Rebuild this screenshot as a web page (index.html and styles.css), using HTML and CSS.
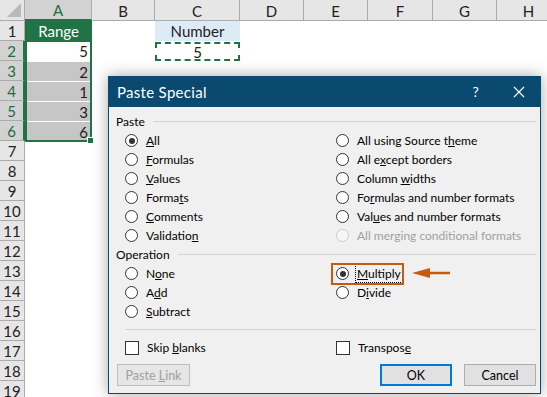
FILE: index.html
```html
<!DOCTYPE html>
<html lang="en">
<head>
    <meta charset="UTF-8">
    <title>Paste Special</title>
    <link rel="stylesheet" href="styles.css">
</head>
<body>
    <div class="sheet">
        <div class="grid">
            <div class="hd corner"><span class="tri"></span></div>
            <div class="hd col sel">A</div>
            <div class="hd col">B</div>
            <div class="hd col">C</div>
            <div class="hd col">D</div>
            <div class="hd col">E</div>
            <div class="hd col">F</div>
            <div class="hd col">G</div>
            <div class="hd col">H</div>

            <div class="rh">1</div>
            <div class="cell head-cell">Range</div><div class="cell"></div><div class="cell label">Number</div><div class="cell"></div><div class="cell"></div><div class="cell"></div><div class="cell"></div><div class="cell"></div>

            <div class="rh sel">2</div>
            <div class="cell num">5</div><div class="cell"></div><div class="cell copied">5</div><div class="cell"></div><div class="cell"></div><div class="cell"></div><div class="cell"></div><div class="cell"></div>

            <div class="rh sel">3</div>
            <div class="cell num grey">2</div><div class="cell"></div><div class="cell"></div><div class="cell"></div><div class="cell"></div><div class="cell"></div><div class="cell"></div><div class="cell"></div>

            <div class="rh sel">4</div>
            <div class="cell num grey">1</div><div class="cell"></div><div class="cell"></div><div class="cell"></div><div class="cell"></div><div class="cell"></div><div class="cell"></div><div class="cell"></div>

            <div class="rh sel">5</div>
            <div class="cell num grey">3</div><div class="cell"></div><div class="cell"></div><div class="cell"></div><div class="cell"></div><div class="cell"></div><div class="cell"></div><div class="cell"></div>

            <div class="rh sel">6</div>
            <div class="cell num grey">6</div><div class="cell"></div><div class="cell"></div><div class="cell"></div><div class="cell"></div><div class="cell"></div><div class="cell"></div><div class="cell"></div>

            <div class="rh">7</div><div class="fill"></div>
            <div class="rh">8</div><div class="fill"></div>
            <div class="rh">9</div><div class="fill"></div>
            <div class="rh">10</div><div class="fill"></div>
            <div class="rh">11</div><div class="fill"></div>
            <div class="rh">12</div><div class="fill"></div>
            <div class="rh">13</div><div class="fill"></div>
            <div class="rh">14</div><div class="fill"></div>
            <div class="rh">15</div><div class="fill"></div>
            <div class="rh">16</div><div class="fill"></div>
            <div class="rh">17</div><div class="fill"></div>
            <div class="rh">18</div><div class="fill"></div>
            <div class="rh">19</div><div class="fill"></div>
        </div>
        <div class="selection"><span class="handle"></span></div>
    </div>

    <div class="dialog">
        <div class="titlebar">
            <span class="dlg-title">Paste Special</span>
            <span class="help">?</span>
            <svg class="close" width="12" height="12" viewBox="0 0 12 12">
                <path d="M1 1 L11 11 M11 1 L1 11" stroke="#fff" stroke-width="1.2" fill="none"/>
            </svg>
        </div>
        <div class="body">
            <div class="legend"><span>Paste</span><span class="rule"></span></div>
            <div class="options">
                <div class="opt"><span class="radio on"></span><span><u>A</u>ll</span></div>
                <div class="opt"><span class="radio"></span><span>All using Source t<u>h</u>eme</span></div>
                <div class="opt"><span class="radio"></span><span><u>F</u>ormulas</span></div>
                <div class="opt"><span class="radio"></span><span>All e<u>x</u>cept borders</span></div>
                <div class="opt"><span class="radio"></span><span><u>V</u>alues</span></div>
                <div class="opt"><span class="radio"></span><span>Column <u>w</u>idths</span></div>
                <div class="opt"><span class="radio"></span><span>Forma<u>t</u>s</span></div>
                <div class="opt"><span class="radio"></span><span>Fo<u>r</u>mulas and number formats</span></div>
                <div class="opt"><span class="radio"></span><span><u>C</u>omments</span></div>
                <div class="opt"><span class="radio"></span><span>Val<u>u</u>es and number formats</span></div>
                <div class="opt"><span class="radio"></span><span>Validatio<u>n</u></span></div>
                <div class="opt off"><span class="radio"></span><span>All merging conditional formats</span></div>
            </div>

            <div class="legend"><span>Operation</span><span class="rule"></span></div>
            <div class="options">
                <div class="opt"><span class="radio"></span><span>N<u>o</u>ne</span></div>
                <div class="opt"><span class="radio on"></span><span class="focus"><u>M</u>ultiply</span></div>
                <div class="opt"><span class="radio"></span><span>A<u>d</u>d</span></div>
                <div class="opt"><span class="radio"></span><span>D<u>i</u>vide</span></div>
                <div class="opt"><span class="radio"></span><span><u>S</u>ubtract</span></div>
                <div class="opt"></div>
            </div>

            <div class="separator"></div>

            <div class="options">
                <div class="opt"><span class="check"></span><span>Skip <u>b</u>lanks</span></div>
                <div class="opt"><span class="check"></span><span>Transpos<u>e</u></span></div>
            </div>

            <div class="buttons">
                <button class="btn disabled">Paste <u>L</u>ink</button>
                <span class="spacer"></span>
                <button class="btn default">OK</button>
                <button class="btn">Cancel</button>
            </div>

            <div class="callout"></div>
            <svg class="arrow" width="40" height="12" viewBox="0 0 40 12">
                <path d="M0 6 L18 1 L18 4.8 L38 4.8 L38 7.2 L18 7.2 L18 11 Z" fill="#c55a11"/>
            </svg>
        </div>
    </div>
</body>
</html>
```

FILE: styles.css
```css
body {
    margin: 0;
    padding: 0;
    background: #fff;
    font-family: 'Lato', 'Liberation Sans', sans-serif;
    overflow: hidden;
}

.sheet {
    position: relative;
    width: 547px;
    height: 397px;
    overflow: hidden;
}

.grid {
    display: grid;
    grid-template-columns: 25px 67px 63px 85px 64px 64px 65px 64px 64px;
    grid-template-rows: 21px;
    grid-auto-rows: 20px;
    font-size: 15px;
    color: #222;
}

/* headers */
.hd {
    background: #e6e6e6;
    border-bottom: 1px solid #ababab;
    box-sizing: border-box;
}

.corner {
    position: relative;
    border-right: 1px solid #ababab;
}

.corner .tri {
    position: absolute;
    right: 3px;
    bottom: 3px;
    width: 0;
    height: 0;
    border-left: 14px solid transparent;
    border-bottom: 14px solid #b9b9b9;
}

.col {
    display: flex;
    align-items: center;
    justify-content: center;
    border-right: 1px solid #ababab;
    padding-top: 1px;
}

.col.sel {
    background: #d2d2d2;
    color: #1e6b42;
    border-bottom: 2px solid #217346;
}

.rh {
    background: #e6e6e6;
    border-bottom: 1px solid #ababab;
    border-right: 1px solid #ababab;
    box-sizing: border-box;
    display: flex;
    align-items: center;
    justify-content: center;
}

.rh.sel {
    background: #d2d2d2;
    color: #1e6b42;
    border-right: 2px solid #217346;
}

.cell {
    display: flex;
    align-items: center;
    justify-content: center;
    box-sizing: border-box;
}

.fill {
    grid-column: 2 / span 8;
}

.head-cell {
    background: #217346;
    color: #fff;
}

.label {
    background: #ddebf7;
}

.num {
    justify-content: flex-end;
    padding-right: 4px;
}

.grey {
    background: #c6c6c6;
    border-top: 1px solid #fff;
}

.copied {
    border: 2px dashed #217346;
    margin: 1px 0 0 0;
}

.selection {
    position: absolute;
    left: 25px;
    top: 40px;
    width: 67px;
    height: 102px;
    border: 2px solid #217346;
    box-sizing: border-box;
}

.selection .handle {
    position: absolute;
    right: -4px;
    bottom: -4px;
    width: 5px;
    height: 5px;
    background: #217346;
    border: 1px solid #fff;
}

/* dialog */
.dialog {
    position: absolute;
    left: 108px;
    top: 76px;
    width: 433px;
    height: 318px;
    background: #f0f0f0;
    border: 1px solid #0a4a70;
    border-top: none;
    box-sizing: border-box;
    box-shadow: 0 0 14px rgba(0, 0, 0, 0.35);
    font-family: 'Lato', 'Noto Sans', sans-serif;
    font-size: 12px;
    color: #000;
}

.titlebar {
    height: 31px;
    background: #0a4a70;
    color: #fff;
    display: flex;
    align-items: center;
    padding: 0 0 0 8px;
    font-size: 15px;
    letter-spacing: 0.3px;
}

.dlg-title {
    flex: 1;
}

.help {
    font-size: 14px;
    margin-right: 34px;
}

.close {
    margin-right: 15px;
}

.body {
    position: relative;
    padding: 5px 4px 0 7px;
}

.legend {
    height: 19px;
    display: flex;
    align-items: center;
}

.legend .rule {
    flex: 1;
    height: 1px;
    background: #d5d5d5;
    margin-left: 8px;
}

.options {
    display: grid;
    grid-template-columns: 211px 1fr;
    grid-auto-rows: 19px;
    padding-left: 9px;
}

.opt {
    display: flex;
    align-items: center;
    gap: 8px;
}

.opt.off {
    color: #a0a0a0;
}

.radio {
    width: 11px;
    height: 11px;
    border: 1px solid #333;
    border-radius: 50%;
    background: #fff;
    display: flex;
    align-items: center;
    justify-content: center;
}

.radio.on::after {
    content: "";
    width: 6px;
    height: 6px;
    border-radius: 50%;
    background: #333;
}

.opt.off .radio {
    border-color: #cccccc;
    background: #f7f7f7;
}

.check {
    width: 12px;
    height: 12px;
    border: 1px solid #333;
    background: #fff;
}

.focus {
    outline: 1px dotted #000;
    outline-offset: 1px;
}

.separator {
    height: 1px;
    background: #d5d5d5;
    margin: 8px 0 8px 9px;
}

.buttons {
    display: flex;
    margin-top: 7px;
    padding-left: 1px;
    gap: 12px;
}

.spacer {
    flex: 1;
}

.btn {
    width: 72px;
    height: 22px;
    font-family: inherit;
    font-size: 12.5px;
    background: #e1e1e1;
    border: 1px solid #adadad;
    padding: 0;
    color: #000;
}

.btn.default {
    border: 2px solid #0078d7;
}

.btn.disabled {
    width: 73px;
    color: #a0a0a0;
    background: #e6e6e6;
    border-color: #bfbfbf;
}

.callout {
    position: absolute;
    left: 222px;
    top: 156px;
    width: 73px;
    height: 22px;
    border: 2px solid #c55a11;
    box-sizing: border-box;
}

.arrow {
    position: absolute;
    left: 303px;
    top: 160px;
}
```
